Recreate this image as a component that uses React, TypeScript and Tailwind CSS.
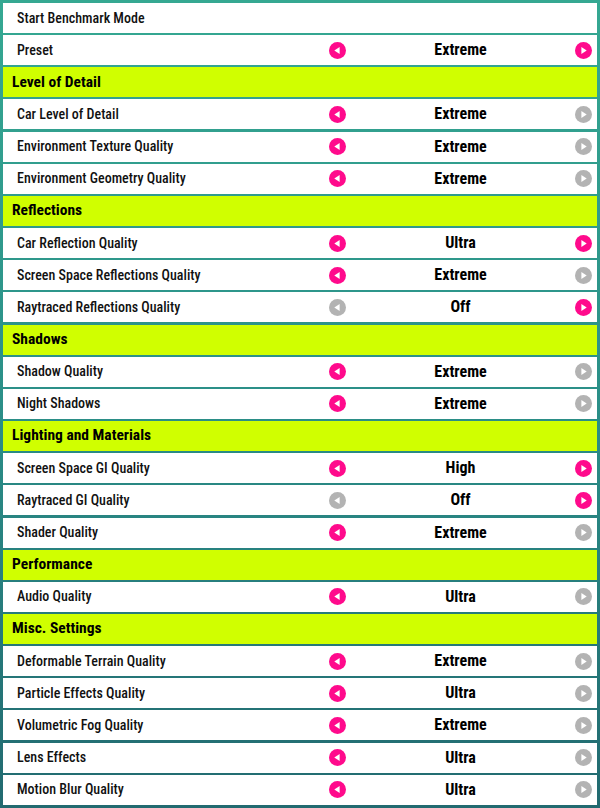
type Arrow = 'on' | 'off'

type Row =
  | { kind: 'plain'; label: string }
  | { kind: 'header'; label: string }
  | { kind: 'option'; label: string; value: string; left: Arrow; right: Arrow }

const rows: Row[] = [
  { kind: 'plain', label: 'Start Benchmark Mode' },
  { kind: 'option', label: 'Preset', value: 'Extreme', left: 'on', right: 'on' },
  { kind: 'header', label: 'Level of Detail' },
  { kind: 'option', label: 'Car Level of Detail', value: 'Extreme', left: 'on', right: 'off' },
  { kind: 'option', label: 'Environment Texture Quality', value: 'Extreme', left: 'on', right: 'off' },
  { kind: 'option', label: 'Environment Geometry Quality', value: 'Extreme', left: 'on', right: 'off' },
  { kind: 'header', label: 'Reflections' },
  { kind: 'option', label: 'Car Reflection Quality', value: 'Ultra', left: 'on', right: 'on' },
  { kind: 'option', label: 'Screen Space Reflections Quality', value: 'Extreme', left: 'on', right: 'off' },
  { kind: 'option', label: 'Raytraced Reflections Quality', value: 'Off', left: 'off', right: 'on' },
  { kind: 'header', label: 'Shadows' },
  { kind: 'option', label: 'Shadow Quality', value: 'Extreme', left: 'on', right: 'off' },
  { kind: 'option', label: 'Night Shadows', value: 'Extreme', left: 'on', right: 'off' },
  { kind: 'header', label: 'Lighting and Materials' },
  { kind: 'option', label: 'Screen Space GI Quality', value: 'High', left: 'on', right: 'on' },
  { kind: 'option', label: 'Raytraced GI Quality', value: 'Off', left: 'off', right: 'on' },
  { kind: 'option', label: 'Shader Quality', value: 'Extreme', left: 'on', right: 'off' },
  { kind: 'header', label: 'Performance' },
  { kind: 'option', label: 'Audio Quality', value: 'Ultra', left: 'on', right: 'off' },
  { kind: 'header', label: 'Misc. Settings' },
  { kind: 'option', label: 'Deformable Terrain Quality', value: 'Extreme', left: 'on', right: 'off' },
  { kind: 'option', label: 'Particle Effects Quality', value: 'Ultra', left: 'on', right: 'off' },
  { kind: 'option', label: 'Volumetric Fog Quality', value: 'Extreme', left: 'on', right: 'off' },
  { kind: 'option', label: 'Lens Effects', value: 'Ultra', left: 'on', right: 'off' },
  { kind: 'option', label: 'Motion Blur Quality', value: 'Ultra', left: 'on', right: 'off' },
]

function ArrowButton({ dir, state }: { dir: 'left' | 'right'; state: Arrow }) {
  const fill = state === 'on' ? '#ff0a8c' : '#b3b3b3'
  return (
    <svg width="17" height="17" viewBox="0 0 16 16">
      <circle cx="8" cy="8" r="8" fill={fill} />
      {dir === 'left' ? (
        <path d="M10 4.6v6.8L5 8z" fill="#fff" />
      ) : (
        <path d="M6 4.6v6.8L11 8z" fill="#fff" />
      )}
    </svg>
  )
}

function SettingRow({ row }: { row: Row }) {
  if (row.kind === 'header') {
    return (
      <div className="h-[30px] flex items-center bg-[#d0ff00] pl-[9px] text-[15.5px] font-bold text-black">
        {row.label}
      </div>
    )
  }
  return (
    <div className="h-[30px] flex items-center bg-white pl-[14px] text-[14px] font-medium text-[#111]">
      <span className="flex-1">{row.label}</span>
      {row.kind === 'option' && (
        <div className="flex items-center w-[268px] pr-[5px]">
          <ArrowButton dir="left" state={row.left} />
          <span className="flex-1 text-center font-bold text-[16px] text-black">{row.value}</span>
          <ArrowButton dir="right" state={row.right} />
        </div>
      )}
    </div>
  )
}

export default function App() {
  return (
    <div
      className="w-[600px] h-[808px] overflow-hidden bg-gradient-to-b from-[#35a892] via-[#2b8f88] to-[#226a70] px-[3px] pt-[3px] flex flex-col gap-[2.17px]"
      style={{ fontFamily: '"Roboto Condensed", "Liberation Sans Narrow", "Arial Narrow", "Liberation Sans", sans-serif' }}
    >
      {rows.map((row, i) => (
        <SettingRow key={i} row={row} />
      ))}
    </div>
  )
}
